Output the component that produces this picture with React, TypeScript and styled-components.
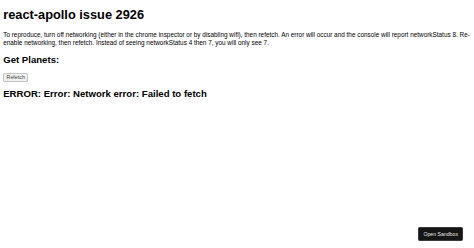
import React from "react";
import styled, { createGlobalStyle } from "styled-components";

const GlobalStyle = createGlobalStyle`
  html, body {
    margin: 0;
    padding: 0;
    background: #fff;
  }
  body {
    font-family: "Liberation Sans", Arial, Helvetica, sans-serif;
    color: #000;
  }
`;

const Page = styled.div`
  padding: 8.2px 3.2px 0;
`;

const Title = styled.h1`
  font-size: 12.8px;
  line-height: 14.7px;
  font-weight: bold;
  margin: 0 0 8.6px;
`;

const Intro = styled.p`
  font-size: 6.4px;
  line-height: 7.36px;
  margin: 0 0 8px;
`;

const SubTitle = styled.h2`
  font-size: 9.6px;
  line-height: 11px;
  font-weight: bold;
  margin: 0 0 7.6px;
`;

const ButtonRow = styled.div`
  display: flex;
  font-size: 6.4px;
  line-height: 7.4px;
`;

const RefetchButton = styled.button`
  font-family: "Liberation Sans", Arial, sans-serif;
  font-size: 5.3px;
  line-height: 6px;
  padding: 0.4px 2.4px;
  margin: 0;
  background: #f0f0f0;
  color: #444;
  border: 0.8px solid #c4c4c4;
  border-radius: 1px;
  cursor: pointer;
`;

const ErrorText = styled.h2`
  font-size: 9.6px;
  line-height: 11px;
  font-weight: bold;
  margin: 6.6px 0 0;
`;

const SandboxLink = styled.a`
  position: fixed;
  right: 11px;
  bottom: 7px;
  display: flex;
  align-items: center;
  height: 12px;
  padding: 0 4px;
  background: #151515;
  border: 0.4px solid #3a3a3a;
  border-radius: 1.5px;
  color: #e6e6e6;
  font-family: "Liberation Sans", Arial, sans-serif;
  font-size: 5.2px;
  text-decoration: none;
`;

export default function App() {
  return (
    <Page>
      <GlobalStyle />
      <Title>react-apollo issue 2926</Title>
      <Intro>
        To reproduce, turn off networking (either in the chrome inspector or by
        disabling wifi), then refetch. An error will occur and the console will
        report networkStatus 8. Re-enable networking, then refetch. Instead of
        seeing networkStatus 4 then 7, you will only see 7.
      </Intro>
      <SubTitle>Get Planets:</SubTitle>
      <ButtonRow>
        <RefetchButton>Refetch</RefetchButton>
      </ButtonRow>
      <ErrorText>ERROR: Error: Network error: Failed to fetch</ErrorText>
      <SandboxLink href="#">Open Sandbox</SandboxLink>
    </Page>
  );
}
